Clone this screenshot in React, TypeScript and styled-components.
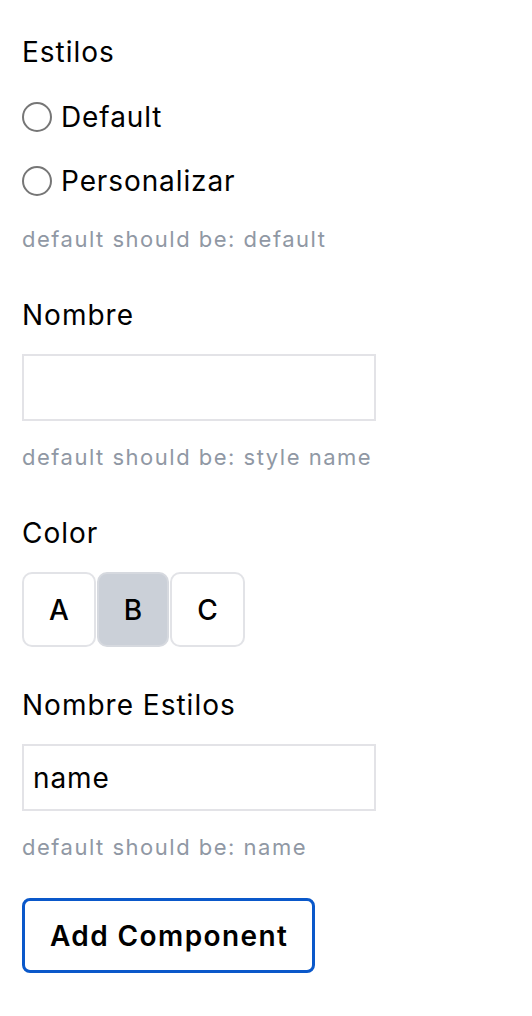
import { FC, useState } from "react";
import styled, { createGlobalStyle } from "styled-components";

const GlobalStyle = createGlobalStyle`
  body {
    margin: 0;
    background: #ffffff;
    font-family: Inter, "Noto Sans", sans-serif;
    color: #000000;
  }
`;

const Form = styled.div`
  display: flex;
  flex-direction: column;
  padding: 32px 22px;
`;

const Section = styled.div<{ gapAfter?: number }>`
  display: flex;
  flex-direction: column;
  align-items: flex-start;
  margin-bottom: ${(props) => props.gapAfter ?? 40}px;
`;

const Label = styled.div`
  font-size: 28px;
  line-height: 40px;
  letter-spacing: 1px;
  margin-bottom: 19px;
`;

const RadioList = styled.div`
  display: flex;
  flex-direction: column;
  gap: 12px;
`;

const RadioRow = styled.label`
  display: flex;
  align-items: center;
  gap: 9px;
  height: 52px;
  font-size: 28px;
  letter-spacing: 0.9px;
  cursor: pointer;
`;

const RadioCircle = styled.span<{ checked: boolean }>`
  width: 30px;
  height: 30px;
  box-sizing: border-box;
  border-radius: 50%;
  border: 2px solid #767676;
  background: ${(props) =>
    props.checked ? "radial-gradient(circle, #0a58ca 45%, #fff 48%)" : "#fff"};
`;

const Hint = styled.div<{ top?: number }>`
  font-size: 22px;
  line-height: 32px;
  letter-spacing: 1.5px;
  color: #9098a4;
  margin-top: ${(props) => props.top ?? 20}px;
`;

const TextInput = styled.input`
  box-sizing: border-box;
  width: 354px;
  height: 67px;
  border: 2px solid #e3e3e7;
  border-radius: 0;
  padding: 0 9px;
  font-family: inherit;
  font-size: 28px;
  letter-spacing: 0.9px;
  color: #000;
  outline: none;
`;

const ToggleGroup = styled.div`
  display: flex;
  gap: 1px;
`;

const ToggleButton = styled.button<{ active: boolean }>`
  box-sizing: border-box;
  height: 75px;
  padding: 0 25px;
  border: 2px solid ${(props) => (props.active ? "#d6d9df" : "#e2e3e7")};
  border-radius: 10px;
  background: ${(props) => (props.active ? "#cbd0d8" : "#ffffff")};
  font-family: inherit;
  font-size: 28px;
  font-weight: 500;
  color: #000;
  cursor: pointer;
`;

const SubmitButton = styled.button`
  align-self: flex-start;
  box-sizing: border-box;
  height: 75px;
  padding: 0 24px 0 25px;
  border: 3px solid #0a58ca;
  border-radius: 8px;
  background: #ffffff;
  font-family: inherit;
  font-size: 28px;
  font-weight: 600;
  letter-spacing: 1.4px;
  color: #000;
  cursor: pointer;
`;

const Radio: FC<{ label: string; checked: boolean; onSelect: () => void }> = ({
  label,
  checked,
  onSelect,
}) => (
  <RadioRow onClick={onSelect}>
    <RadioCircle checked={checked} />
    {label}
  </RadioRow>
);

const App: FC = () => {
  const [style, setStyle] = useState<string | null>(null);
  const [color, setColor] = useState("B");
  const [name, setName] = useState("");
  const [styleName, setStyleName] = useState("name");

  return (
    <>
      <GlobalStyle />
      <Form>
        <Section>
          <Label>Estilos</Label>
          <RadioList>
            <Radio
              label="Default"
              checked={style === "default"}
              onSelect={() => setStyle("default")}
            />
            <Radio
              label="Personalizar"
              checked={style === "custom"}
              onSelect={() => setStyle("custom")}
            />
          </RadioList>
          <Hint top={16}>default should be: default</Hint>
        </Section>

        <Section>
          <Label>Nombre</Label>
          <TextInput value={name} onChange={(e) => setName(e.target.value)} />
          <Hint>default should be: style name</Hint>
        </Section>

        <Section gapAfter={38}>
          <Label>Color</Label>
          <ToggleGroup>
            {["A", "B", "C"].map((c) => (
              <ToggleButton
                key={c}
                active={color === c}
                onClick={() => setColor(c)}
              >
                {c}
              </ToggleButton>
            ))}
          </ToggleGroup>
        </Section>

        <Section gapAfter={35}>
          <Label>Nombre Estilos</Label>
          <TextInput
            value={styleName}
            onChange={(e) => setStyleName(e.target.value)}
          />
          <Hint>default should be: name</Hint>
        </Section>

        <SubmitButton>Add Component</SubmitButton>
      </Form>
    </>
  );
};

export default App;
